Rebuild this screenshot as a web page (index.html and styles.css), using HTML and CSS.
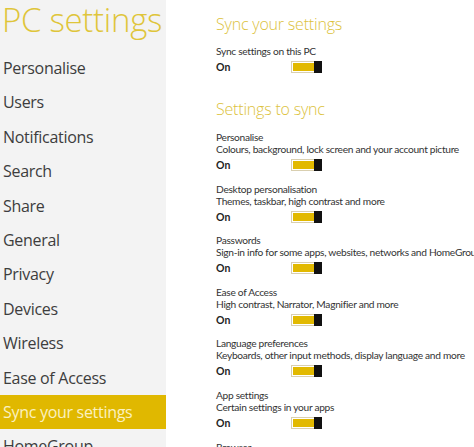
FILE: index.html
```html
<!DOCTYPE html>
<html>
<head>
<meta charset="utf-8">
<link rel="stylesheet" href="styles.css">
</head>
<body>
<div class="page">
  <aside class="side">
    <div class="title">PC settings</div>
    <nav class="nav">
      <div class="item">Personalise</div>
      <div class="item">Users</div>
      <div class="item">Notifications</div>
      <div class="item">Search</div>
      <div class="item">Share</div>
      <div class="item">General</div>
      <div class="item">Privacy</div>
      <div class="item">Devices</div>
      <div class="item">Wireless</div>
      <div class="item">Ease of Access</div>
      <div class="item active">Sync your settings</div>
      <div class="item">HomeGroup</div>
    </nav>
  </aside>
  <main class="main">
    <h2 class="head first">Sync your settings</h2>
    <div class="group solo">
      <div class="label">Sync settings on this PC</div>
      <div class="row"><span class="on">On</span><span class="toggle"><span class="fill"></span><span class="thumb"></span></span></div>
    </div>
    <h2 class="head second">Settings to sync</h2>
    <div class="group">
      <div class="label">Personalise</div>
      <div class="desc">Colours, background, lock screen and your account picture</div>
      <div class="row"><span class="on">On</span><span class="toggle"><span class="fill"></span><span class="thumb"></span></span></div>
    </div>
    <div class="group">
      <div class="label">Desktop personalisation</div>
      <div class="desc">Themes, taskbar, high contrast and more</div>
      <div class="row"><span class="on">On</span><span class="toggle"><span class="fill"></span><span class="thumb"></span></span></div>
    </div>
    <div class="group">
      <div class="label">Passwords</div>
      <div class="desc">Sign-in info for some apps, websites, networks and HomeGroup</div>
      <div class="row"><span class="on">On</span><span class="toggle"><span class="fill"></span><span class="thumb"></span></span></div>
    </div>
    <div class="group">
      <div class="label">Ease of Access</div>
      <div class="desc">High contrast, Narrator, Magnifier and more</div>
      <div class="row"><span class="on">On</span><span class="toggle"><span class="fill"></span><span class="thumb"></span></span></div>
    </div>
    <div class="group">
      <div class="label">Language preferences</div>
      <div class="desc">Keyboards, other input methods, display language and more</div>
      <div class="row"><span class="on">On</span><span class="toggle"><span class="fill"></span><span class="thumb"></span></span></div>
    </div>
    <div class="group">
      <div class="label">App settings</div>
      <div class="desc">Certain settings in your apps</div>
      <div class="row"><span class="on">On</span><span class="toggle"><span class="fill"></span><span class="thumb"></span></span></div>
    </div>
    <div class="group">
      <div class="label">Browser</div>
    </div>
  </main>
</div>
</body>
</html>
```
FILE: styles.css
```css
html, body {
  margin: 0;
  padding: 0;
  height: 100%;
  overflow: hidden;
  background: #ffffff;
}
body {
  font-family: "Open Sans", "Noto Sans", sans-serif;
  color: #333333;
}
.page {
  display: flex;
  height: 447px;
  overflow: hidden;
}
.side {
  width: 166px;
  flex: none;
  background: #f3f3f3;
}
.title {
  height: 51px;
  box-sizing: border-box;
  padding-left: 2px;
  font-size: 33px;
  font-weight: 300;
  letter-spacing: -0.3px;
  line-height: 40px;
  color: #dfc53a;
  white-space: nowrap;
}
.nav {
  display: flex;
  flex-direction: column;
}
.item {
  height: 34.4px;
  line-height: 34.4px;
  padding-left: 3px;
  font-size: 16px;
  letter-spacing: -0.3px;
  color: #3d3d3d;
  white-space: nowrap;
}
.item.active {
  background: #e0b800;
  color: #fbf1c0;
}
.main {
  flex: 1;
  padding-left: 50px;
  min-width: 0;
}
.head {
  margin: 0;
  font-size: 16px;
  font-weight: 300;
  color: #dcc23c;
  white-space: nowrap;
  letter-spacing: -0.2px;
}
.head.first {
  height: 45px;
  line-height: 48px;
}
.head.second {
  height: 56px;
  box-sizing: border-box;
  padding-top: 22px;
  line-height: 24px;
}
.group {
  height: 51.6px;
  display: flex;
  flex-direction: column;
  font-family: "Lato", "Open Sans", sans-serif;
}
.group.solo {
  height: 30px;
}
.label, .desc {
  font-size: 10.2px;
  line-height: 12px;
  letter-spacing: -0.3px;
  white-space: nowrap;
  color: #333333;
}
.row {
  display: flex;
  align-items: center;
  height: 16px;
  margin-top: 2px;
}
.on {
  width: 75px;
  font-size: 10.5px;
  font-weight: 700;
  color: #222;
}
.toggle {
  display: flex;
  width: 31px;
  height: 12px;
  box-sizing: border-box;
  border: 1px solid #d9cfb0;
  background: #fff;
}
.fill {
  flex: 1;
  margin: 1px 0 1px 1px;
  background: #e2b900;
}
.thumb {
  width: 8px;
  background: #111;
  margin: -1px -1px -1px 0;
}
```
